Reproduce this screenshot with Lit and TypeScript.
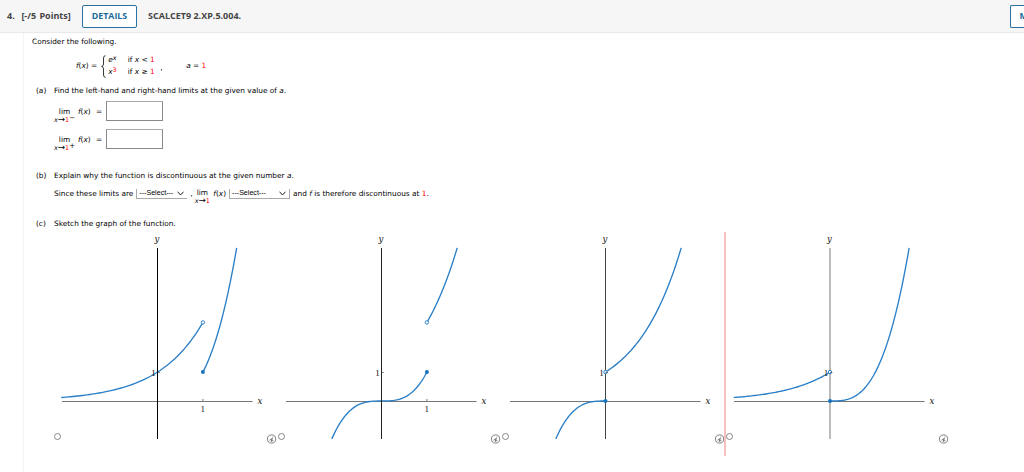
import { LitElement, html, svg, css } from "lit";
import { customElement, property } from "lit/decorators.js";

type Fn = (x: number) => number;

interface Piece {
  fn: Fn;
  from: number;
  to: number;
}

interface Graph {
  pieces: Piece[];
  open: number[];
  closed: number[];
  tick: boolean;
  axis: string;
  axisWidth: number;
  // sub-pixel position of the vertical axis
  axisX: number;
}

const exp: Fn = (x) => Math.exp(x);
const cube: Fn = (x) => x * x * x;

const UNIT_X = 45.4;
const UNIT_Y = 28.9;
const ORIGIN_Y = 169;
const TOP = 5.3;
const BOTTOM = -1.31;

const GRAPHS: Graph[] = [
  {
    pieces: [
      { fn: exp, from: -2.12, to: 1 },
      { fn: cube, from: 1, to: Math.cbrt(TOP) },
    ],
    open: [1, Math.E],
    closed: [1, 1],
    tick: true,
    axis: "#000",
    axisWidth: 1,
    axisX: 96.5,
  },
  {
    pieces: [
      { fn: cube, from: Math.cbrt(BOTTOM), to: 1 },
      { fn: exp, from: 1, to: Math.log(TOP) },
    ],
    open: [1, Math.E],
    closed: [1, 1],
    tick: true,
    axis: "#222",
    axisWidth: 1,
    axisX: 96.5,
  },
  {
    pieces: [
      { fn: cube, from: Math.cbrt(BOTTOM), to: 0 },
      { fn: exp, from: 0, to: Math.log(TOP) },
    ],
    open: [0, 1],
    closed: [0, 0],
    tick: false,
    axis: "#444",
    axisWidth: 1,
    axisX: 96.5,
  },
  {
    pieces: [
      { fn: exp, from: -2.12, to: 0 },
      { fn: cube, from: 0, to: Math.cbrt(TOP) },
    ],
    open: [0, 1],
    closed: [0, 0],
    tick: false,
    axis: "#bbb",
    axisWidth: 2,
    axisX: 97,
  },
];

@customElement("function-graph")
export class FunctionGraph extends LitElement {
  static styles = css`
    :host {
      display: block;
      width: 206px;
      height: 224px;
    }
    svg {
      display: block;
    }
    text {
      font-family: "Liberation Serif", serif;
      font-size: 9px;
      fill: #111;
    }
    .name {
      font-family: "DejaVu Serif", "Liberation Serif", serif;
      font-size: 8.5px;
      font-style: italic;
    }
    .curve {
      fill: none;
      stroke: #2a7fc7;
      stroke-width: 1.35;
    }
    .open {
      fill: #fff;
      stroke: #2a7fc7;
      stroke-width: 1;
    }
    .closed {
      fill: #1673bd;
    }
    .x-axis {
      stroke: #777;
      stroke-width: 1;
    }
    .mark {
      stroke: #555;
      stroke-width: 0.8;
    }
  `;

  @property({ attribute: false }) graph: Graph;

  curve(piece: Piece) {
    const steps = 60;
    const points: string[] = [];
    for (let i = 0; i <= steps; i++) {
      const x = piece.from + ((piece.to - piece.from) * i) / steps;
      const px = this.graph.axisX + x * UNIT_X;
      const py = ORIGIN_Y - piece.fn(x) * UNIT_Y;
      points.push(`${px.toFixed(2)},${py.toFixed(2)}`);
    }
    return svg`<polyline class="curve" points=${points.join(" ")} />`;
  }

  render() {
    const g = this.graph;
    const x = (v: number) => g.axisX + v * UNIT_X;
    const y = (v: number) => ORIGIN_Y - v * UNIT_Y;
    return html`
      <svg width="206" height="224" viewBox="0 0 206 224">
        <line class="x-axis" x1="1" y1="169.5" x2="191.5" y2="169.5" />
        ${g.pieces.map((p) => this.curve(p))}
        <text x=${g.axisX - 6.2} y="144">1</text>
        <line x1=${g.axisX} y1="16" x2=${g.axisX} y2="207" stroke=${g.axis} stroke-width=${g.axisWidth} />
        <circle class="open" cx=${x(g.open[0])} cy=${y(g.open[1])} r="1.7" />
        <circle class="closed" cx=${x(g.closed[0])} cy=${y(g.closed[1])} r="2" />
        <line class="mark" x1=${g.axisX} y1="140.5" x2=${g.axisX + 2.3} y2="140.5" />
        ${g.tick
          ? svg`
            <line class="mark" x1=${x(1)} y1="167" x2=${x(1)} y2="169" />
            <text x=${x(1) - 2.5} y="180">1</text>`
          : ""}
        <text class="name" x=${g.axisX - 3} y="10">y</text>
        <text class="name" x="196.5" y="172">x</text>
      </svg>
    `;
  }
}

@customElement("app-root")
export class AppRoot extends LitElement {
  static styles = css`
    :host {
      display: block;
      width: 1024px;
      height: 472px;
      overflow: hidden;
      background: #fff;
      color: #000;
      font: 7.36px/12px "DejaVu Sans", sans-serif;
      white-space: nowrap;
    }
    * {
      box-sizing: border-box;
    }
    header {
      display: flex;
      align-items: center;
      height: 33px;
      padding-left: 7px;
      background: #f6f6f6;
      border-bottom: 1px solid #e9e9e9;
      font: bold 9px/12px "Open Sans", sans-serif;
      color: #444;
    }
    .points {
      width: 75px;
      word-spacing: 1px;
    }
    .button {
      flex: none;
      width: 55px;
      height: 23px;
      margin-right: 11px;
      border: 1px solid #29729f;
      border-radius: 2px;
      background: #fff;
      color: #1c6a9c;
      font-size: 8.8px;
      line-height: 21px;
      text-align: center;
    }
    .more {
      margin: 0 0 0 auto;
      width: 14px;
      padding-left: 8.5px;
      border-right: 0;
      border-radius: 2px 0 0 2px;
      overflow: hidden;
      text-align: left;
    }
    main {
      margin-left: 23px;
      height: 439px;
      padding: 3px 0 0 8px;
      border-left: 1px solid #f4f4f4;
    }
    .row {
      display: flex;
      align-items: center;
    }
    .part {
      padding-left: 4px;
    }
    .part span {
      width: 18px;
    }
    .part-b {
      margin-top: 17px;
    }
    .part-c {
      margin: 12px 0 2px;
    }
    .red {
      color: #f00;
    }
    .definition {
      height: 37px;
      padding: 0 0 1px 44px;
    }
    .brace {
      display: block;
      margin: 0 2px 0 4px;
    }
    .cases {
      display: grid;
      grid-template-columns: 19.5px 32.5px;
      line-height: 12px;
    }
    sup {
      font-size: 6.3px;
      line-height: 0;
      vertical-align: 2.5px;
    }
    .comma {
      width: 26px;
      padding-top: 3px;
    }
    .limit {
      height: 28px;
      padding-left: 22px;
    }
    .lim {
      display: flex;
      flex-direction: column;
      align-items: center;
      width: 21px;
      line-height: 9px;
      margin-right: 3px;
      padding-top: 10px;
    }
    .under {
      font-size: 6.5px;
    }
    .under sup {
      font-size: 7px;
    }
    .arrow {
      font-size: 8.6px;
      line-height: 0;
    }
    .fx {
      width: 18px;
      padding-top: 2px;
    }
    .equals {
      width: 10px;
      padding-top: 2px;
    }
    .answer {
      width: 57px;
      height: 20px;
      border: 1px solid #888;
      border-top-color: #aaa;
    }
    .since {
      height: 24px;
      padding-left: 22px;
    }
    .select {
      display: flex;
      align-items: center;
      justify-content: space-between;
      height: 10px;
      margin-left: 3px;
      padding: 0 3px 0 2px;
      border: solid #aaa;
      border-width: 0 0 1px 1px;
      font: 7.1px/9px "Liberation Sans", sans-serif;
    }
    .narrow {
      width: 51px;
    }
    .wide {
      width: 61px;
      margin-right: 3px;
      border-right-width: 1px;
    }
    .since .lim {
      width: 20px;
      margin: 0 1px 0 1px;
      padding-top: 6px;
    }
    .pause {
      width: 4px;
      padding-left: 3px;
    }
    .graphs {
      display: flex;
      padding-left: 21.5px;
    }
    .choice {
      display: flex;
      flex: none;
      align-items: flex-end;
      width: 224.3px;
      height: 224px;
    }
    .radio {
      flex: none;
      width: 7px;
      height: 7px;
      margin-bottom: 16.5px;
      border: 1px solid #888;
      border-radius: 50%;
    }
    .info {
      flex: none;
      margin-bottom: 12px;
    }
    .divider {
      flex: none;
      width: 2px;
      height: 224px;
      margin: 0 0.2px 0 -2.2px;
      background: #f4c1c1;
    }
  `;

  select(kind: string) {
    return html`
      <div class="select ${kind}">
        ---Select---
        <svg width="7" height="5" viewBox="0 0 7 5" fill="none" stroke="#222">
          <path d="M.5 .7 3.5 4 6.5 .7" />
        </svg>
      </div>
    `;
  }

  limit(sign: string) {
    return html`
      <div class="row limit">
        <div class="lim">
          <span>lim</span>
          <span class="under"><i>x</i><span class="arrow">→</span><span class="red">1</span><sup>${sign}</sup></span>
        </div>
        <div class="fx"><i>f</i>(<i>x</i>)</div>
        <div class="equals">=</div>
        <div class="answer"></div>
      </div>
    `;
  }

  choice(graph: Graph) {
    return html`
      <div class="choice">
        <div class="radio"></div>
        <function-graph .graph=${graph}></function-graph>
        <svg class="info" width="10" height="10" viewBox="0 0 10 10" fill="none" stroke="#333">
          <circle cx="4.6" cy="5" r="4.1" stroke-width=".6" />
          <path d="M2.6 6.2 5.4 4.4 4.2 7.4 6.4 6.4M5.9 2.6v.8" stroke-width=".7" />
        </svg>
      </div>
    `;
  }

  render() {
    return html`
      <header>
        <div class="points">4.&nbsp; [-/5 Points]</div>
        <div class="button">DETAILS</div>
        <div>SCALCET9 2.XP.5.004.</div>
        <div class="button more">M</div>
      </header>
      <main>
        <div>Consider the following.</div>
        <div class="row definition">
          <div><i>f</i>(<i>x</i>) =</div>
          <svg class="brace" width="5" height="23" viewBox="0 0 5 23" fill="none" stroke="#222" stroke-width=".9">
            <path d="M4.5 .7Q2.5 .7 2.5 3V9Q2.5 11.5 .5 11.5 2.5 11.5 2.5 14V20Q2.5 22.3 4.5 22.3" />
          </svg>
          <div class="cases">
            <div><i>e</i><sup><i>x</i></sup></div>
            <div>if <i>x</i> &lt; <span class="red">1</span></div>
            <div><i>x</i><sup class="red">3</sup></div>
            <div>if <i>x</i> ≥ <span class="red">1</span></div>
          </div>
          <div class="comma">,</div>
          <div><i>a</i> = <span class="red">1</span></div>
        </div>
        <div class="row part"><span>(a)</span>Find the left-hand and right-hand limits at the given value of&nbsp;<i>a</i>.</div>
        ${this.limit("−")}${this.limit("+")}
        <div class="row part part-b"><span>(b)</span>Explain why the function is discontinuous at the given number&nbsp;<i>a</i>.</div>
        <div class="row since">
          Since these limits are ${this.select("narrow")}
          <div class="pause">,</div>
          <div class="lim">
            <span>lim</span>
            <span class="under"><i>x</i><span class="arrow">→</span><span class="red">1</span></span>
          </div>
          <div><i>f</i>(<i>x</i>)</div>
          ${this.select("wide")}
          and&nbsp;<i>f</i>&nbsp;is therefore discontinuous at&nbsp;<span class="red">1</span>.
        </div>
        <div class="row part part-c"><span>(c)</span>Sketch the graph of the function.</div>
        <div class="graphs">
          ${GRAPHS.slice(0, 3).map((g) => this.choice(g))}
          <div class="divider"></div>
          ${this.choice(GRAPHS[3])}
        </div>
      </main>
    `;
  }
}
